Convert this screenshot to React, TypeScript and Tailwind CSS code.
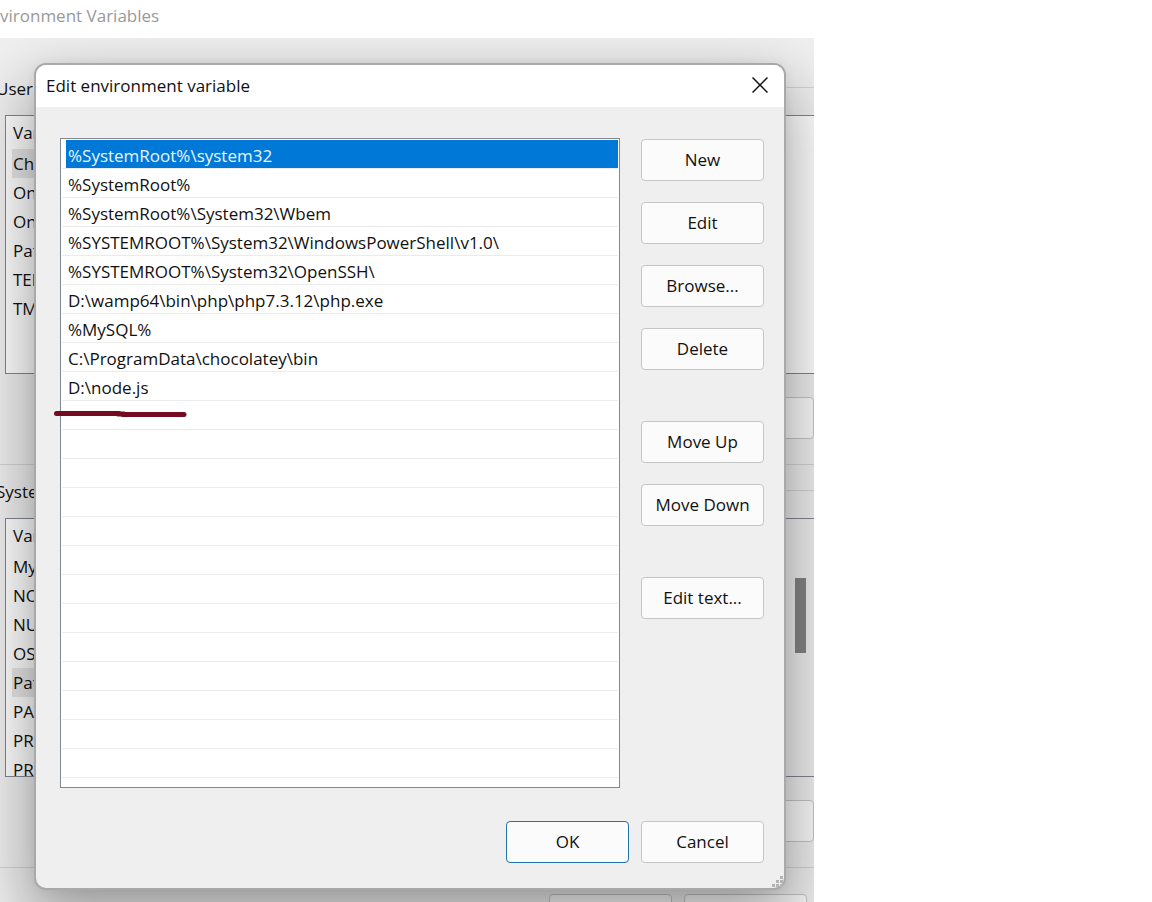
import { clsx } from 'clsx';

interface Variable {
  id: number;
  name: string;
  selected?: boolean;
}

const USER_VARIABLES: Variable[] = [
  { id: 1, name: 'Ch', selected: true },
  { id: 2, name: 'On' },
  { id: 3, name: 'On' },
  { id: 4, name: 'Pat' },
  { id: 5, name: 'TEM' },
  { id: 6, name: 'TM' },
];

const SYSTEM_VARIABLES: Variable[] = [
  { id: 1, name: 'My' },
  { id: 2, name: 'NO' },
  { id: 3, name: 'NU' },
  { id: 4, name: 'OS' },
  { id: 5, name: 'Pat', selected: true },
  { id: 6, name: 'PAT' },
  { id: 7, name: 'PR' },
  { id: 8, name: 'PR' },
];

const PATH_ENTRIES = [
  '%SystemRoot%\\system32',
  '%SystemRoot%',
  '%SystemRoot%\\System32\\Wbem',
  '%SYSTEMROOT%\\System32\\WindowsPowerShell\\v1.0\\',
  '%SYSTEMROOT%\\System32\\OpenSSH\\',
  'D:\\wamp64\\bin\\php\\php7.3.12\\php.exe',
  '%MySQL%',
  'C:\\ProgramData\\chocolatey\\bin',
  'D:\\node.js',
];

const EMPTY_ROWS = 13;

const ACTION_GROUPS = [
  ['New', 'Edit', 'Browse...', 'Delete'],
  ['Move Up', 'Move Down'],
  ['Edit text...'],
];

interface DialogButtonProps {
  label?: string;
  primary?: boolean;
}

function DialogButton({ label, primary }: DialogButtonProps) {
  return (
    <button
      type="button"
      className={clsx(
        'h-[42px] w-[123px] shrink-0 rounded border bg-[#fbfbfb] hover:bg-white',
        primary ? 'border-[#1f74a8]' : 'border-[#c6c6c6]',
      )}
    >
      {label}
    </button>
  );
}

interface VariableGroupProps {
  title: string;
  variables: Variable[];
  scrollable?: boolean;
}

function VariableGroup({ title, variables, scrollable }: VariableGroupProps) {
  return (
    <fieldset className="min-w-0 border-y border-[#d4d4d4] pb-[25px]">
      <legend className="-ml-1 h-6 pr-1 leading-7">{title}</legend>
      <div className="mt-4 ml-[5px] flex h-[259px] overflow-hidden border border-r-0 border-[#828790] bg-white">
        <div className="min-w-0 flex-1 pl-1.5">
          <table className="text-left">
            <thead>
              <tr className="h-[33px]">
                <th className="px-px py-0 font-normal">Var</th>
              </tr>
            </thead>
            <tbody>
              {variables.map((variable) => (
                <tr key={variable.id} className={clsx('h-[29px]', variable.selected && 'bg-[#e8e8e8]')}>
                  <td className="px-px py-0">{variable.name}</td>
                </tr>
              ))}
            </tbody>
          </table>
        </div>
        {scrollable && (
          <div className="flex w-8 justify-end bg-[#f0f0f0] pt-[59px] pr-2">
            <div className="h-[75px] w-[11px] bg-[#858585]" />
          </div>
        )}
      </div>
      <div className="mt-[23px] flex justify-end">
        <DialogButton />
      </div>
    </fieldset>
  );
}

// Hand-drawn marker line under the last entry
function MarkerLine() {
  return (
    <svg
      className="absolute top-[38px] -left-2 h-2 w-[133px]"
      viewBox="0 0 133 8"
      fill="none"
      stroke="#760a22"
      strokeWidth="5"
      strokeLinecap="round"
      aria-hidden="true"
    >
      <path d="M2.5 3.5H65M69 4.5H130" />
      <path d="M64 4H70" />
    </svg>
  );
}

function PathList() {
  return (
    <ul role="listbox" aria-label="Path entries" className="h-[650px] min-w-0 flex-1 border border-[#828790] bg-white px-px pt-px">
      {PATH_ENTRIES.map((entry, index) => (
        <li
          key={entry}
          role="option"
          aria-selected={index === 0}
          className="relative h-[29px] border-b border-[#ebebeb] pl-1 leading-8"
        >
          <div className={clsx('h-7 pl-0.5', index === 0 && 'bg-[#0078d7] text-[#e8f6ff]')}>{entry}</div>
          {index === PATH_ENTRIES.length - 1 && <MarkerLine />}
        </li>
      ))}
      {Array.from({ length: EMPTY_ROWS }, (_, index) => (
        <li key={index} aria-hidden="true" className="h-[29px] border-b border-[#ebebeb]" />
      ))}
    </ul>
  );
}

function ResizeGrip() {
  return (
    <svg className="absolute right-px bottom-px size-[11px]" viewBox="0 0 11 11" fill="#b4b4b4" aria-hidden="true">
      <path d="M8 0h3v3H8zM4 4h3v3H4zM8 4h3v3H8zM0 8h3v3H0zM4 8h3v3H4zM8 8h3v3H8z" />
    </svg>
  );
}

function EditVariableDialog() {
  return (
    <div
      role="dialog"
      aria-labelledby="dialog-title"
      className="absolute top-[63px] right-7 left-[34px] rounded-xl border-2 border-[#a9a9a9] bg-[#efefef] shadow-[0_28px_64px_8px_rgba(0,0,0,0.34),0_0_12px_rgba(0,0,0,0.06)]"
    >
      <header className="flex h-[42px] items-center justify-between rounded-t-[10px] bg-white pr-4 pl-2.5">
        <h2 id="dialog-title">Edit environment variable</h2>
        <button type="button" aria-label="Close" className="pb-0.5">
          <svg className="size-4" viewBox="0 0 16 16" fill="none" stroke="#111" strokeWidth="1.5" aria-hidden="true">
            <path d="M0.5 0.5l15 15M15.5 0.5l-15 15" />
          </svg>
        </button>
      </header>
      <div className="pt-[31px] pr-5 pb-[25px] pl-6">
        <div className="flex gap-[21px]">
          <PathList />
          <div className="flex flex-col gap-[51px] pt-px">
            {ACTION_GROUPS.map((labels) => (
              <div key={labels[0]} className="flex flex-col gap-[21px]">
                {labels.map((label) => (
                  <DialogButton key={label} label={label} />
                ))}
              </div>
            ))}
          </div>
        </div>
        <div className="mt-[33px] flex justify-end gap-3">
          <DialogButton label="OK" primary />
          <DialogButton label="Cancel" />
        </div>
      </div>
      <ResizeGrip />
    </div>
  );
}

export default function App() {
  return (
    <div className="h-screen overflow-hidden bg-white font-['Open_Sans','Noto_Sans',sans-serif] text-[17px] leading-6 text-[#111]">
      <main className="relative min-h-full w-full max-w-[814px] overflow-hidden bg-[#f0f0f0]">
        {/* the title bar stays above the dialog's shadow */}
        <h1 className="relative z-10 h-[38px] bg-white pt-1 text-[#999]">vironment Variables</h1>
        <div className="pt-[37px]">
          <VariableGroup title="User" variables={USER_VARIABLES} />
          <div className="mt-[13px]">
            <VariableGroup title="Syste" variables={SYSTEM_VARIABLES} scrollable />
          </div>
          <div className="mt-[26px] flex justify-end gap-3 pr-[7px]">
            <DialogButton />
            <DialogButton />
          </div>
        </div>
        <EditVariableDialog />
      </main>
    </div>
  );
}
